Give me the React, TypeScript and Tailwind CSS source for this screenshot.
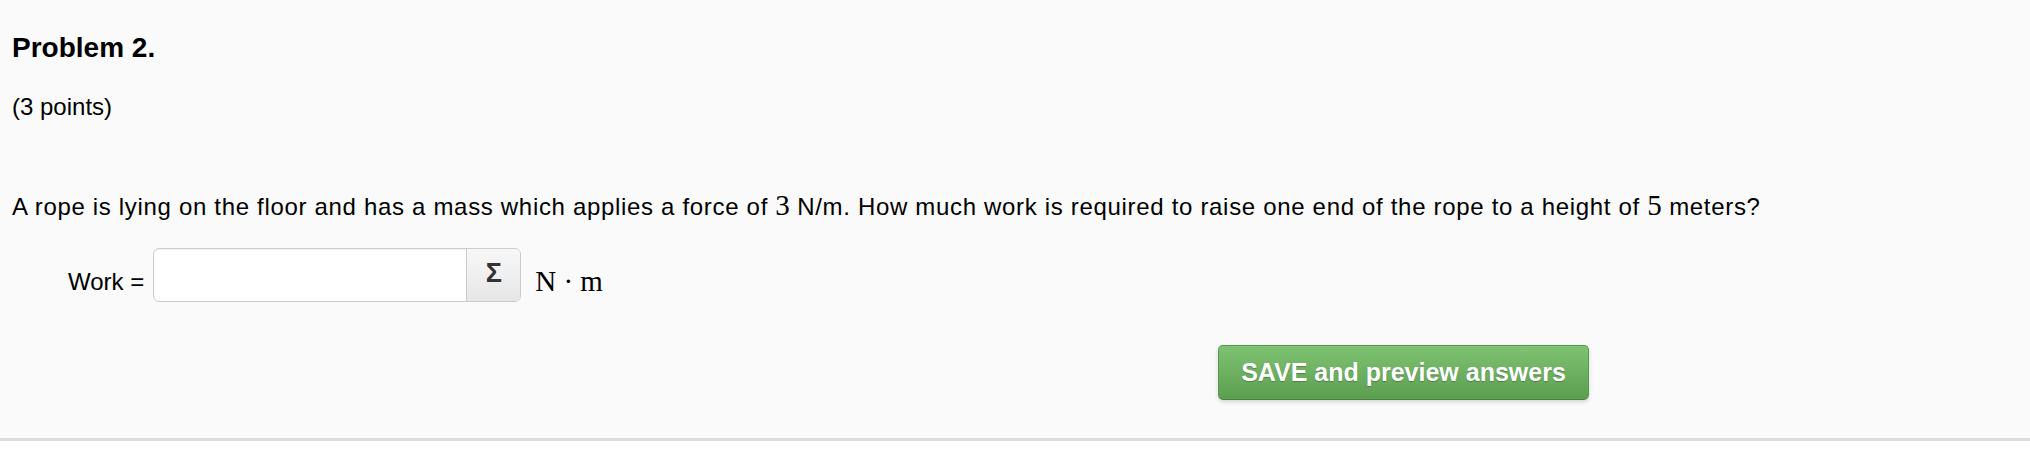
export default function App() {
  const sans = "font-['Liberation_Sans',Arial,Helvetica,sans-serif]";
  const serif = "font-['Liberation_Serif','Times_New_Roman',serif]";

  return (
    <div className={`${sans} text-black`}>
      <div className="h-[441px] bg-[#fafafa] border-b-[3px] border-[#dcdcdc] pl-[12px] pt-[32px]">
        <h2 className="text-[28px] leading-[32px] font-bold">Problem 2.</h2>
        <p className="mt-[29px] text-[24px] leading-[28px]">(3 points)</p>

        <p className="mt-[70px] text-[24px] leading-[28px] tracking-[0.68px] whitespace-nowrap">
          A rope is lying on the floor and has a mass which applies a force of{" "}
          <span className={`${serif} text-[29px] tracking-normal`}>3</span> N/m. How much work is required to raise one
          end of the rope to a height of <span className={`${serif} text-[29px] tracking-normal`}>5</span> meters?
        </p>

        <div className="mt-[27px] flex items-start pl-[56px]">
          <label className="pt-[20px] text-[24px] leading-[28px] whitespace-nowrap">Work =</label>
          <div className="ml-[9px] flex h-[54px] rounded-[6px] border-[1.5px] border-[#cccccc] bg-white shadow-[inset_0_1px_1px_rgba(0,0,0,0.06)]">
            <input
              type="text"
              className="w-[312px] h-full bg-transparent px-3 text-[22px] outline-none rounded-l-[6px]"
            />
            <button
              type="button"
              className="w-[54px] h-full flex items-center justify-center border-l-[1.5px] border-[#cccccc] rounded-r-[5px] bg-gradient-to-b from-[#f8f8f8] to-[#e6e6e6] text-[#333333] text-[27px] font-bold leading-none"
            >
              <span className="-translate-y-[2px]">Σ</span>
            </button>
          </div>
          <span className={`${serif} ml-[14px] pt-[16px] text-[29px] leading-[34px] whitespace-nowrap`}>N · m</span>
        </div>

        <div className="mt-[43px] pl-[1206px]">
          <button
            type="button"
            className="w-[371px] h-[55px] flex items-center justify-center rounded-[5px] border border-[#569a4b] border-b-[#4a8040] bg-gradient-to-b from-[#7ec372] to-[#5c9e50] text-white text-[25px] font-bold whitespace-nowrap shadow-[0_2px_4px_rgba(0,0,0,0.15)] [text-shadow:0_1px_1px_rgba(0,0,0,0.25)]"
          >
            SAVE and preview answers
          </button>
        </div>
      </div>
    </div>
  );
}
